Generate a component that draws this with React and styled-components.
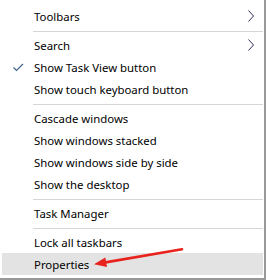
import React from "react";
import styled, { createGlobalStyle } from "styled-components";

const GlobalStyle = createGlobalStyle`
    html, body {
        margin: 0;
        padding: 0;
        background: #fff;
    }
    body {
        font-family: "Noto Sans", "Liberation Sans", sans-serif;
    }
`;

const Menu = styled.ul`
    position: relative;
    list-style: none;
    margin: 0;
    width: 266px;
    height: 280px;
    box-sizing: border-box;
    padding: 5px 1px 3px 2px;
    background: #fff;
    border-right: 2px solid #999;
    border-bottom: 2px solid #999;
    color: #000;
    font-size: 11.4px;
`;

const Item = styled.li`
    position: relative;
    display: flex;
    align-items: center;
    height: 22px;
    padding-left: 32px;
    background: ${(p) => (p.$hover ? "#e3e3e3" : "transparent")};
    white-space: nowrap;
`;

const Check = styled.svg`
    position: absolute;
    left: 10px;
    top: 7px;
`;

const Chevron = styled.svg`
    margin-left: auto;
    margin-right: 9px;
`;

const Separator = styled.li`
    height: 1px;
    margin: 4px 0 2px 31px;
    background: #d7d7d7;
`;

const Arrow = styled.svg`
    position: absolute;
    left: 0;
    top: 0;
    pointer-events: none;
`;

const groups = [
    [{ label: "Toolbars", sub: true }],
    [
        { label: "Search", sub: true },
        { label: "Show Task View button", checked: true },
        { label: "Show touch keyboard button" },
    ],
    [
        { label: "Cascade windows" },
        { label: "Show windows stacked" },
        { label: "Show windows side by side" },
        { label: "Show the desktop" },
    ],
    [{ label: "Task Manager" }],
    [{ label: "Lock all taskbars" }, { label: "Properties", hover: true }],
];

const MenuItem = ({ label, sub, checked, hover }) => (
    <Item $hover={hover}>
        {checked && (
            <Check width="12" height="9" viewBox="0 0 12 9">
                <polyline points="1.5,4.5 4.5,7.5 11,1" fill="none" stroke="#3b5f8a" strokeWidth="1.1" />
            </Check>
        )}
        {label}
        {sub && (
            <Chevron width="6" height="12" viewBox="0 0 6 12">
                <polyline points="0.5,0.5 5.5,6 0.5,11.5" fill="none" stroke="#3a2d5c" strokeWidth="1" />
            </Chevron>
        )}
    </Item>
);

export default function App() {
    return (
        <>
            <GlobalStyle />
            <Menu>
                {groups.map((g, i) => (
                    <React.Fragment key={i}>
                        {i > 0 && <Separator />}
                        {g.map((it) => (
                            <MenuItem key={it.label} {...it} />
                        ))}
                    </React.Fragment>
                ))}
                <Arrow width="266" height="280" viewBox="0 0 266 280">
                    <line x1="182" y1="249.3" x2="104" y2="262.6" stroke="#e8221c" strokeWidth="2.6" strokeLinecap="round" />
                    <polygon points="94,264.3 105.3,257.6 107,266.9" fill="#e8221c" />
                </Arrow>
            </Menu>
        </>
    );
}
